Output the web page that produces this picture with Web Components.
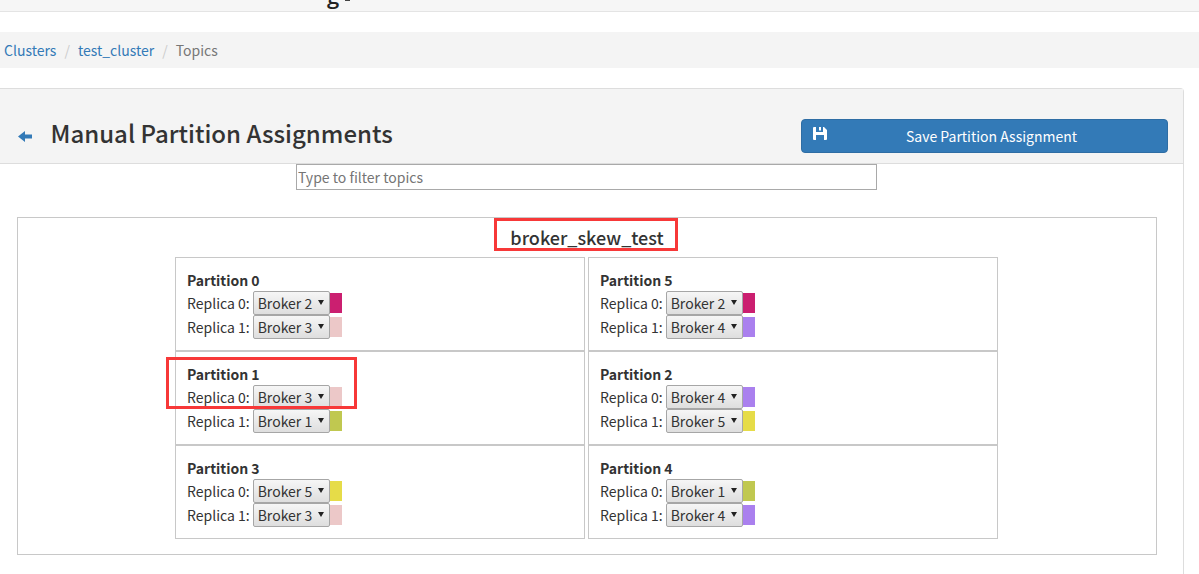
<!DOCTYPE html>
<html>
<head>
<meta charset="utf-8">
<style>
  html, body { margin: 0; padding: 0; background: #fff; overflow: hidden; height: 574px; }
  body { font-family: "Noto Sans CJK SC", "Source Sans Pro", "Noto Sans", sans-serif; font-size: 14px; color: #333; }
</style>
</head>
<body>
<app-page></app-page>

<script>
// top nav, only the bottom edge of it is in the shot
class TopBar extends HTMLElement {
  constructor() {
    super();
    this.attachShadow({ mode: 'open' }).innerHTML = `
      <style>
        :host { display: flex; align-items: flex-start; height: 11px; background: #f6f6f6; border-bottom: 1px solid #e4e4e4; overflow: hidden; }
        .logo { margin: -20px 0 0 327px; font-family: "Open Sans", sans-serif; font-size: 22px; line-height: 30px; font-weight: 600; color: #222; }
        .tick { width: 5px; height: 1px; margin-left: 6px; background: #444; }
      </style>
      <span class="logo">g</span><i class="tick"></i>`;
  }
}

class BreadCrumb extends HTMLElement {
  constructor() {
    super();
    this.attachShadow({ mode: 'open' }).innerHTML = `
      <style>
        :host { display: flex; align-items: center; height: 36px; margin-top: 20px; padding-left: 4px; background: #f4f4f4; line-height: 20px; color: #777; }
        ::slotted(a) { color: #337ab7; text-decoration: none; }
        .sep { color: #ccc; padding: 0 8px; }
      </style>
      <slot name="a"></slot><span class="sep">/</span><slot name="b"></slot><span class="sep">/</span><span>Topics</span>`;
  }
}

class SaveButton extends HTMLElement {
  constructor() {
    super();
    this.attachShadow({ mode: 'open' }).innerHTML = `
      <style>
        :host { display: block; width: 367px; height: 34px; }
        .btn { position: relative; display: flex; align-items: center; justify-content: center; box-sizing: border-box; height: 100%; padding-left: 14px; background: #337ab7; border: 1px solid #2e6da4; border-radius: 4px; color: #fff; line-height: 20px; }
        svg { position: absolute; left: 11px; top: 7px; }
      </style>
      <div class="btn">
        <svg width="14" height="13" viewBox="0 0 14 13"><path fill="#fff" fill-rule="evenodd" d="M1 0h10l3 3v9a1 1 0 0 1-1 1H1a1 1 0 0 1-1-1V1a1 1 0 0 1 1-1zM3 0v5h7V0H8v3.500H6V0zM3 8v5h8V8z"/></svg>
        <slot></slot>
      </div>`;
  }
}

class PanelHead extends HTMLElement {
  constructor() {
    super();
    this.attachShadow({ mode: 'open' }).innerHTML = `
      <style>
        :host { display: flex; align-items: flex-end; height: 75px; box-sizing: border-box; background: #f4f4f4; border-bottom: 1px solid #ddd; padding: 0 15px 10px 18px; }
        .back { width: 14px; height: 11px; margin: 0 0 11px; }
        h2 { flex: 1; margin: 0 0 4px 18.500px; font-size: 24px; font-weight: 500; line-height: 32px; color: #333; }
      </style>
      <svg class="back" viewBox="0 0 14 11"><path fill="#337ab7" d="M0 5.500 7 0v3.500h7v4H7V11z"/></svg>
      <h2><slot></slot></h2>
      <slot name="action"></slot>`;
  }
}

class ReplicaRow extends HTMLElement {
  static get observedAttributes() { return ['replica', 'broker', 'color']; }
  constructor() {
    super();
    this.attachShadow({ mode: 'open' });
  }
  connectedCallback() { this.render(); }
  attributeChangedCallback() { this.render(); }
  render() {
    this.shadowRoot.innerHTML = `
      <style>
        :host { display: flex; align-items: center; height: 24px; line-height: 20px; }
        .sel { display: flex; align-items: center; box-sizing: border-box; width: 77px; height: 24px; margin-left: 3px; padding-left: 4px; border: 1px solid #a6a6a6; border-radius: 2px; background: linear-gradient(#f6f6f6, #dedede); color: #333; }
        .sel span { flex: 1; }
        .caret { width: 0; height: 0; margin: -2px 5px 0 0; border: 3px solid transparent; border-top: 5px solid #222; border-bottom: 0; }
        .swatch { width: 12.500px; height: 20px; background: var(--c); }
      </style>
      <span>Replica ${this.getAttribute('replica')}:</span>
      <div class="sel"><span>Broker ${this.getAttribute('broker')}</span><i class="caret"></i></div>
      <div class="swatch" style="--c:${this.getAttribute('color')}"></div>`;
  }
}

class PartitionCard extends HTMLElement {
  constructor() {
    super();
    this.attachShadow({ mode: 'open' }).innerHTML = `
      <style>
        :host { display: block; box-sizing: border-box; height: 94px; padding: 12px 11px 0; border: 1px solid #c8c8c8; }
        b { display: block; font-weight: 700; line-height: 20px; height: 21px; color: #333; }
      </style>
      <b></b><slot></slot>`;
  }
  connectedCallback() {
    this.shadowRoot.querySelector('b').textContent = 'Partition ' + this.getAttribute('n');
  }
}

const COLORS = { 1: '#c0c850', 2: '#cb1f70', 3: '#ecc8c8', 4: '#aa80ee', 5: '#e6dc48' };
const CARDS = [
  [0, 2, 3], [5, 2, 4],
  [1, 3, 1], [2, 4, 5],
  [3, 5, 3], [4, 1, 4]
];

class TopicBox extends HTMLElement {
  constructor() {
    super();
    this.attachShadow({ mode: 'open' }).innerHTML = `
      <style>
        :host { display: block; box-sizing: border-box; height: 338px; margin: 27px 0 0 17px; width: 1140px; border: 1px solid #c8c8c8; }
        h3 { margin: 6px 0 0; height: 33px; text-align: center; font-size: 18px; font-weight: 500; line-height: 26px; color: #333; }
        .grid { display: grid; grid-template-columns: 410px 410px; column-gap: 3px; justify-content: center; margin-left: -1px; }
      </style>
      <h3><slot></slot></h3>
      <div class="grid"></div>`;
    const grid = this.shadowRoot.querySelector('.grid');
    for (const [n, a, b] of CARDS) {
      const card = document.createElement('partition-card');
      card.setAttribute('n', n);
      [a, b].forEach((broker, i) => {
        const row = document.createElement('replica-row');
        row.setAttribute('replica', i);
        row.setAttribute('broker', broker);
        row.setAttribute('color', COLORS[broker]);
        card.appendChild(row);
      });
      grid.appendChild(card);
    }
  }
}

class FilterInput extends HTMLElement {
  constructor() {
    super();
    this.attachShadow({ mode: 'open' }).innerHTML = `
      <style>
        :host { display: block; box-sizing: border-box; width: 581px; height: 26px; margin: 0 0 0 296px; }
        input { box-sizing: border-box; width: 100%; height: 100%; padding: 0 1px; border: 1px solid #a9a9a9; font: inherit; color: #333; outline: 0; background: #fff; }
        input::placeholder { color: #757575; opacity: 1; }
      </style>
      <input placeholder="Type to filter topics">`;
  }
}

class AppPage extends HTMLElement {
  constructor() {
    super();
    this.attachShadow({ mode: 'open' }).innerHTML = `
      <style>
        :host { display: block; width: 1199px; height: 574px; overflow: hidden; }
        .panel { box-sizing: border-box; width: 1184px; height: 500px; margin-top: 20px; border: 1px solid #ddd; border-left: 0; border-radius: 0 4px 0 0; }
      </style>
      <top-bar></top-bar>
      <bread-crumb><a slot="a" href="#">Clusters</a><a slot="b" href="#">test_cluster</a></bread-crumb>
      <div class="panel">
        <panel-head>Manual Partition Assignments<save-button slot="action">Save Partition Assignment</save-button></panel-head>
        <filter-input></filter-input>
        <topic-box>broker_skew_test</topic-box>
      </div>
      <mark-box style="left:494px;top:218px;width:184px;height:33px"></mark-box>
      <mark-box style="left:166px;top:357px;width:191px;height:52px"></mark-box>`;
  }
}

// red annotation rectangles drawn over the screenshot
class MarkBox extends HTMLElement {
  constructor() {
    super();
    this.attachShadow({ mode: 'open' }).innerHTML = `
      <style>:host { position: absolute; box-sizing: border-box; border: 3px solid #f73838; }</style>`;
  }
}

customElements.define('top-bar', TopBar);
customElements.define('bread-crumb', BreadCrumb);
customElements.define('save-button', SaveButton);
customElements.define('panel-head', PanelHead);
customElements.define('replica-row', ReplicaRow);
customElements.define('partition-card', PartitionCard);
customElements.define('topic-box', TopicBox);
customElements.define('filter-input', FilterInput);
customElements.define('mark-box', MarkBox);
customElements.define('app-page', AppPage);
</script>
</body>
</html>
